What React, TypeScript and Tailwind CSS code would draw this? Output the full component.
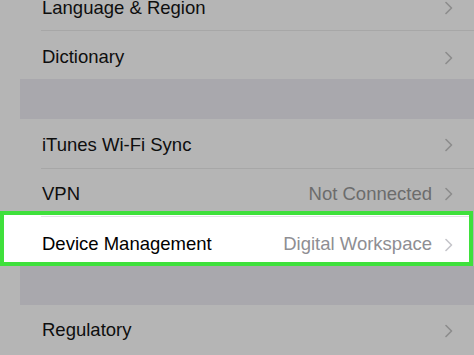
import type { ReactNode } from "react";

function Chevron({ light }: { light?: boolean }) {
    return (
        <svg width="8" height="14" viewBox="0 0 8 14" className="shrink-0">
            <path d="M1 1.5 L6.5 7 L1 12.5" fill="none" stroke={light ? "#c5c5ca" : "#8c8c8c"} strokeWidth="1.6" strokeLinecap="round" strokeLinejoin="round" />
        </svg>
    );
}

function Row({ label, value, light, className }: { label: ReactNode; value?: string; light?: boolean; className: string }) {
    return (
        <div className={`flex items-center ${className}`}>
            <span className={`flex-1 ${light ? "text-black" : "text-[#0e0e0e]"}`}>{label}</span>
            {value && <span className={`mr-[13px] ${light ? "text-[#8e8e93]" : "text-[#6c6c6c]"}`}>{value}</span>}
            <Chevron light={light} />
        </div>
    );
}

function Separator({ light }: { light?: boolean }) {
    return <div className={`h-px ${light ? "ml-[37px] bg-[#e2e2e7]" : "ml-[41px] bg-[#a7a7a7]"}`} />;
}

export default function App() {
    return (
        <div className="w-[474px] h-[355px] overflow-hidden bg-[#b5b5b5] font-['Liberation_Sans',Arial,sans-serif] text-[18.5px] leading-none">
            <Row label="Language & Region" className="h-[50px] -mt-[20px] pt-[6px] pl-[42px] pr-[21px]" />
            <Separator />
            <Row label="Dictionary" className="h-[48px] pt-[5px] pl-[42px] pr-[21px]" />
            <div className="h-[40px] ml-[20px] bg-[#a9a8ad]" />
            <Row label="iTunes Wi-Fi Sync" className="h-[49px] pt-[3px] pl-[42px] pr-[21px]" />
            <Separator />
            <Row label="VPN" value="Not Connected" className="h-[42px] pt-[8px] pl-[42px] pr-[21px]" />
            <div className="h-[55px] w-[473px] border-4 border-[#3fe03c] bg-white">
                <div className="h-px" />
                <Separator light />
                <Row label="Device Management" value="Digital Workspace" light className="h-[45px] pt-[10px] pl-[38px] pr-[16px]" />
            </div>
            <div className="h-[39px] ml-[20px] bg-[#a9a8ad]" />
            <Row label="Regulatory" className="h-[50px] pt-[1px] pl-[42px] pr-[21px]" />
        </div>
    );
}
